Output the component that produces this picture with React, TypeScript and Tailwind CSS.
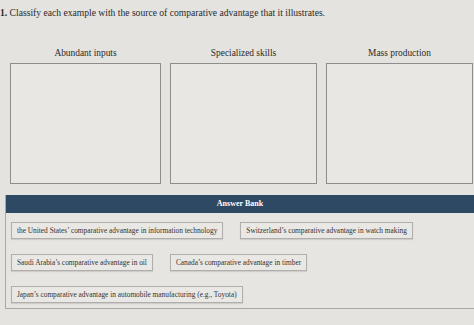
const columns = [
  { label: "Abundant inputs", w: "w-[151px]" },
  { label: "Specialized skills", w: "w-[147px]" },
  { label: "Mass production", w: "w-[147px]" },
]

const rows = [
  [
    "the United States\u2019 comparative advantage in information technology",
    "Switzerland\u2019s comparative advantage in watch making",
  ],
  ["Saudi Arabia\u2019s comparative advantage in oil", "Canada\u2019s comparative advantage in timber"],
  ["Japan\u2019s comparative advantage in automobile manufacturing (e.g., Toyota)"],
]

function Chip({ label }: { label: string }) {
  return (
    <div className="h-[17px] flex items-center border border-[#b0afab] bg-[#e9e8e4] px-[5px] text-[7.35px] text-[#333] whitespace-nowrap shadow-[0_1px_1px_rgba(0,0,0,0.1)]">
      {label}
    </div>
  )
}

export default function App() {
  return (
    <div className="w-[474px] h-[325px] overflow-hidden bg-[#e4e3df] text-[#2a2a2a] font-['Liberation_Serif',serif]">
      <div className="pt-[6px] text-[9.6px] leading-[13px]">
        <span className="font-bold">1.</span> Classify each example with the source of comparative advantage that it illustrates.
      </div>

      <div className="mt-[28px] pl-[10px] flex gap-[9px]">
        {columns.map((c) => (
          <div key={c.label} className={c.w}>
            <div className="text-center text-[9.4px] leading-[12px] mb-[4px]">{c.label}</div>
            <div className="h-[121px] border border-[#8e8d8a] bg-[#e8e7e3]" />
          </div>
        ))}
      </div>

      <div className="mt-[11px] ml-[5px] border-l border-b border-[#a9a8a4]">
        <div className="h-[18px] bg-[#2e4964] flex items-center justify-center text-white text-[8px] font-bold">
          Answer Bank
        </div>
        <div className="bg-[#e6e5e1] px-[5px] pt-[9px] pb-[5px] flex flex-col gap-[15px]">
          {rows.map((r, i) => (
            <div key={i} className="flex gap-[17px]">
              {r.map((l) => (
                <Chip key={l} label={l} />
              ))}
            </div>
          ))}
        </div>
      </div>
    </div>
  )
}
